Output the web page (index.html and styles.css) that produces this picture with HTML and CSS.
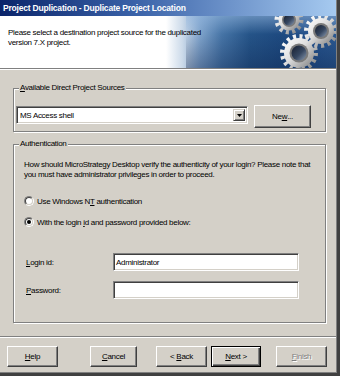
FILE: index.html
```html
<!DOCTYPE html>
<html>
<head>
<meta charset="utf-8">
<link rel="stylesheet" href="styles.css">
</head>
<body>
<div class="frame">
  <div class="dialog">
    <div class="titlebar">Project Duplication - Duplicate Project Location</div>
    <div class="header">
      <p class="header-text">Please select a destination project source for the duplicated<br>version 7.X project.</p>
      <svg class="gears" width="80" height="52" viewBox="0 0 80 52">
        <defs>
          <linearGradient id="gg" x1="0" y1="0" x2="1" y2="1">
            <stop offset="0" stop-color="#ffffff"/>
            <stop offset="0.45" stop-color="#dedede"/>
            <stop offset="1" stop-color="#7e7e7e"/>
          </linearGradient>
          <linearGradient id="hg" x1="0" y1="0" x2="1" y2="1">
            <stop offset="0" stop-color="#161e2e"/>
            <stop offset="0.55" stop-color="#354660"/>
            <stop offset="1" stop-color="#8a9ab0"/>
          </linearGradient>
        </defs>
        <g>
          <circle cx="33" cy="4" r="12" fill="none" stroke="url(#gg)" stroke-width="5" stroke-dasharray="3 3.28"/>
          <circle cx="33" cy="4" r="10.5" fill="url(#gg)"/>
          <circle cx="33" cy="4" r="7" fill="#7a7a7a"/>
          <circle cx="33" cy="4" r="5.5" fill="url(#hg)"/>
        </g>
        <g>
          <circle cx="65" cy="15" r="14.5" fill="none" stroke="url(#gg)" stroke-width="5" stroke-dasharray="3 3.5"/>
          <circle cx="65" cy="15" r="13" fill="url(#gg)"/>
          <circle cx="65" cy="15" r="8" fill="#7a7a7a"/>
          <circle cx="65" cy="15" r="6" fill="url(#hg)"/>
        </g>
        <g>
          <circle cx="43" cy="37" r="16.5" fill="none" stroke="url(#gg)" stroke-width="5" stroke-dasharray="3 3.48"/>
          <circle cx="43" cy="37" r="15" fill="url(#gg)"/>
          <circle cx="43" cy="37" r="9.5" fill="#7a7a7a"/>
          <circle cx="43" cy="37" r="7.5" fill="url(#hg)"/>
        </g>
      </svg>
    </div>
    <div class="header-sep"></div>
    <div class="content">
      <div class="group group-sources">
        <span class="group-label"><u>A</u>vailable Direct Project Sources</span>
        <div class="source-row">
          <div class="combo">
            <span class="combo-text">MS Access shell</span>
            <span class="combo-btn"><svg width="5" height="3" viewBox="0 0 5 3"><path d="M0 0H5L2.5 3Z" fill="#000"/></svg></span>
          </div>
          <div class="btn btn-new">Ne<u>w</u>...</div>
        </div>
      </div>
      <div class="group group-auth">
        <span class="group-label">Authentication</span>
        <p class="auth-text">How should MicroStrategy Desktop verify the authenticity of your login? Please note that<br>you must have administrator privileges in order to proceed.</p>
        <div class="radio-row"><span class="radio"></span><span>Use Windows N<u>T</u> authentication</span></div>
        <div class="radio-row radio-row-2"><span class="radio radio-checked"></span><span>With the login <u>i</u>d and password provided below:</span></div>
        <div class="field-row"><span class="field-label"><u>L</u>ogin id:</span><div class="input">Administrator</div></div>
        <div class="field-row field-row-2"><span class="field-label"><u>P</u>assword:</span><div class="input"></div></div>
      </div>
    </div>
    <div class="separator"></div>
    <div class="buttons">
      <div class="btn btn-help"><u>H</u>elp</div>
      <div class="btn btn-cancel"><u>C</u>ancel</div>
      <div class="btn btn-back">&lt;&nbsp;<u>B</u>ack</div>
      <div class="btn btn-next btn-default"><u>N</u>ext&nbsp;&gt;</div>
      <div class="btn btn-finish btn-disabled"><u>F</u>inish</div>
    </div>
  </div>
</div>
</body>
</html>
```

FILE: styles.css
```css
html, body {
  margin: 0;
  padding: 0;
}
body {
  width: 340px;
  height: 376px;
  overflow: hidden;
  background: #d4d0c8;
  font-family: "Liberation Sans", Arial, sans-serif;
  font-size: 8px;
  letter-spacing: -0.3px;
  color: #000;
}
u {
  text-decoration: underline;
  text-underline-offset: 1px;
}
.frame {
  width: 340px;
  height: 376px;
  box-sizing: border-box;
  border-right: 3px solid #404040;
  border-bottom: 3px solid #404040;
}
.dialog {
  height: 100%;
  box-sizing: border-box;
  border-right: 1px solid #808080;
  border-bottom: 1px solid #808080;
  display: flex;
  flex-direction: column;
}
.titlebar {
  height: 16px;
  line-height: 17px;
  padding-left: 3px;
  background: linear-gradient(to right, #0a246a 0%, #3a62a8 40%, #a6caf0 100%);
  color: #fff;
  font-weight: bold;
  font-size: 8.5px;
  letter-spacing: -0.2px;
  white-space: nowrap;
  flex: none;
}
.header {
  position: relative;
  height: 52px;
  flex: none;
  overflow: hidden;
  background:
    linear-gradient(to bottom, rgba(150,185,225,0.55) 0%, rgba(20,50,100,0) 35%, rgba(10,30,70,0.35) 100%) right top / 150px 100% no-repeat,
    linear-gradient(to right, #ffffff 0px, #ffffff 166px, #cddbea 182px, #7fa3cb 200px, #4674a6 222px, #255488 250px, #1e4a80 280px, #23508a 310px, #2a5890 336px);
}
.header-text {
  position: relative;
  margin: 0;
  padding: 12px 0 0 8px;
  line-height: 10px;
  white-space: nowrap;
}
.gears {
  position: absolute;
  top: 0;
  right: 0;
}
.header-sep {
  flex: none;
  border-top: 1px solid #808080;
  border-bottom: 1px solid #ffffff;
}
.content {
  padding-top: 18px;
  flex: none;
}
.group {
  position: relative;
  margin-left: 13px;
  width: 313px;
  box-sizing: border-box;
  border: 1px solid #808080;
  box-shadow: inset 1px 1px 0 #ffffff, 1px 1px 0 #ffffff;
}
.group-label {
  position: absolute;
  top: -6px;
  left: 5px;
  padding: 0 1px;
  line-height: 10px;
  background: #d4d0c8;
  white-space: nowrap;
}
.group-sources {
  height: 44px;
  padding: 17px 0 0 2px;
}
.source-row {
  display: flex;
  align-items: flex-start;
}
.combo {
  width: 232px;
  height: 18px;
  box-sizing: border-box;
  border: 1px solid;
  border-color: #808080 #ffffff #ffffff #808080;
  box-shadow: inset 1px 1px 0 #404040, inset -1px -1px 0 #d4d0c8;
  background: #fff;
  display: flex;
  align-items: center;
  padding: 2px;
}
.combo-text {
  flex: 1;
  padding-left: 1px;
  white-space: nowrap;
}
.combo-btn {
  width: 12px;
  height: 12px;
  box-sizing: border-box;
  background: #d4d0c8;
  border: 1px solid;
  border-color: #d4d0c8 #404040 #404040 #d4d0c8;
  box-shadow: inset 1px 1px 0 #ffffff, inset -1px -1px 0 #808080;
  display: flex;
  align-items: center;
  justify-content: center;
}
.btn {
  box-sizing: border-box;
  height: 21px;
  background: #d4d0c8;
  border: 1px solid;
  border-color: #ffffff #404040 #404040 #ffffff;
  box-shadow: inset -1px -1px 0 #808080;
  display: flex;
  align-items: center;
  justify-content: center;
  white-space: nowrap;
  flex: none;
}
.btn-new {
  width: 57px;
  height: 23px;
  margin-left: 6px;
  margin-top: -1px;
}
.group-auth {
  margin-top: 12px;
  height: 179px;
  padding: 15px 0 0 10px;
}
.auth-text {
  margin: 0;
  line-height: 10px;
  white-space: nowrap;
}
.radio-row {
  display: flex;
  align-items: center;
  height: 12px;
  margin-top: 15px;
  gap: 3px;
}
.radio-row-2 {
  margin-top: 9px;
}
.radio {
  position: relative;
  width: 10px;
  height: 10px;
  box-sizing: border-box;
  border-radius: 50%;
  border: 1px solid;
  border-color: #808080 #ffffff #ffffff #808080;
  flex: none;
}
.radio::before {
  content: "";
  position: absolute;
  inset: 0;
  border-radius: 50%;
  border: 1px solid;
  border-color: #404040 #d4d0c8 #d4d0c8 #404040;
  background: #fff;
}
.radio-checked::after {
  content: "";
  position: absolute;
  left: 2px;
  top: 2px;
  width: 4px;
  height: 4px;
  border-radius: 50%;
  background: #000;
}
.field-row {
  display: flex;
  align-items: center;
  margin-top: 25px;
}
.field-row-2 {
  margin-top: 10px;
}
.field-label {
  width: 87px;
  margin-left: 2px;
  flex: none;
}
.input {
  width: 186px;
  height: 18px;
  box-sizing: border-box;
  border: 1px solid;
  border-color: #808080 #ffffff #ffffff #808080;
  box-shadow: inset 1px 1px 0 #404040, inset -1px -1px 0 #d4d0c8;
  background: #fff;
  padding: 0 2px;
  display: flex;
  align-items: center;
}
.separator {
  flex: none;
  margin-top: 13px;
  border-top: 1px solid #808080;
  border-bottom: 1px solid #ffffff;
}
.buttons {
  flex: none;
  display: flex;
  margin-top: 8px;
  padding-left: 7px;
}
.btn-help { width: 51px; }
.btn-cancel { width: 47px; margin-left: 32px; }
.btn-back { width: 51px; margin-left: 19px; }
.btn-next { width: 50px; margin-left: 4px; }
.btn-finish { width: 51px; margin-left: 15px; }
.btn-default {
  border-color: #000;
  box-shadow: inset 1px 1px 0 #ffffff, inset -1px -1px 0 #404040, inset -2px -2px 0 #808080;
}
.btn-disabled {
  color: #808080;
  text-shadow: 1px 1px 0 #ffffff;
}
```
